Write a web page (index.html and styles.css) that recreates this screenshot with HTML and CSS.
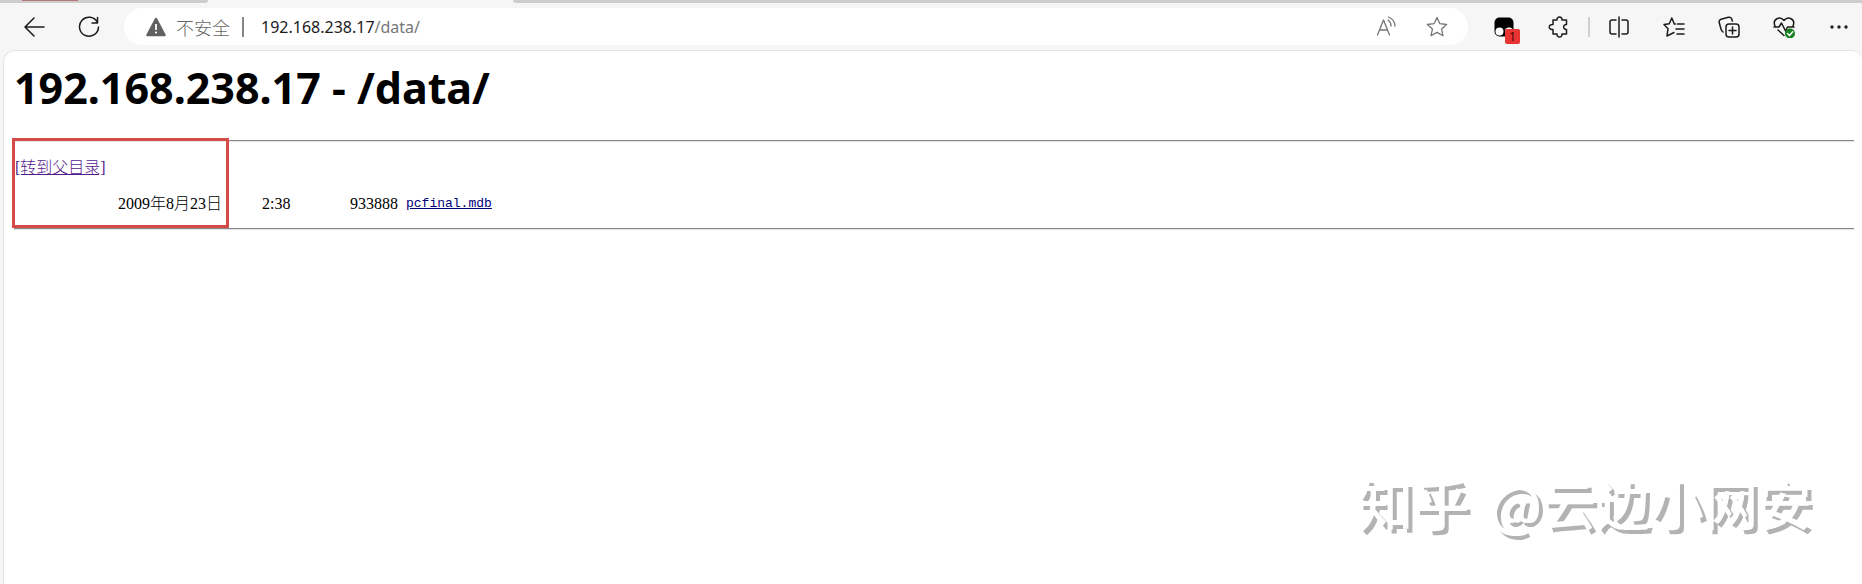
FILE: index.html
```
<!DOCTYPE html>
<html lang="zh-CN">
<head>
<meta charset="utf-8">
<title>192.168.238.17 - /data/</title>
<link rel="stylesheet" href="styles.css">
</head>
<body>
<div class="tabs"><div class="tab-left"><i class="tab-mark"></i></div><div class="tab-right"></div></div>
<header class="toolbar">
  <nav class="nav">
    <button class="icon" aria-label="返回"><svg width="22" height="22" viewBox="0 0 22 22"><path d="M11 2 2 11l9 9M2 11h19"/></svg></button>
    <button class="icon" aria-label="刷新"><svg width="22" height="22" viewBox="0 0 22 22"><path d="M19.5 6.500A9.500 9.500 0 1 0 20.500 11M19.500 1.500v5.500h-5.500"/></svg></button>
  </nav>
  <div class="address">
    <svg class="warn" width="20" height="20" viewBox="0 0 20 20"><path d="M10 2 18.500 18h-17z" fill="#606060" stroke="#606060" stroke-width="2.500" stroke-linejoin="round"/><path d="M10 7v6" stroke="#fff" stroke-width="1.800"/><circle cx="10" cy="15.500" r="1.100" fill="#fff"/></svg>
    <span class="unsafe">不安全</span>
    <i class="bar"></i>
    <div class="url">192.168.238.17<span class="path">/data/</span></div>
    <button class="icon grey" aria-label="朗读此页"><svg width="22" height="22" viewBox="0 0 22 22"><path d="m1.500 19 6-15 6 15M3.500 14h8M12 4q3 2 3 6M12.500 1q6.500 3 6.500 9"/></svg></button>
    <button class="icon grey star" aria-label="收藏"><svg width="22" height="22" viewBox="0 0 22 22"><path d="m11 1.500 2.900 6.200 6.700.8-5 4.600 1.400 6.700-6-3.400-6 3.400 1.400-6.700-5-4.600 6.700-.8z"/></svg></button>
  </div>
  <div class="actions">
    <button class="icon ext" aria-label="扩展程序"><svg width="22" height="22" viewBox="0 0 22 22"><rect x="1.500" y="1.500" width="19" height="19" rx="5" fill="#000" stroke="none"/><circle cx="6.500" cy="15.500" r="4" fill="#fff" stroke="none"/><circle cx="16" cy="15.500" r="4" fill="#fff" stroke="none"/></svg><span class="badge">1</span></button>
    <button class="icon" aria-label="扩展"><svg width="22" height="22" viewBox="0 0 22 22"><path d="M5 4h4c-.5-4 5.500-4 5 0h4.500v4.500c-3.800-.3-3.800 5.300 0 5v4.500h-4.500c.5 4-5.500 4-5 0H5v-4.500c-5 .3-5-5.300 0-5z"/></svg></button>
    <i class="rule"></i>
    <button class="icon" aria-label="拆分屏幕"><svg width="22" height="22" viewBox="0 0 22 22"><path d="M8 4H4Q2 4 2 6v10q0 2 2 2h4M14 4h4q2 0 2 2v10q0 2-2 2h-4M11 1v20"/></svg></button>
    <button class="icon" aria-label="收藏夹"><svg width="22" height="22" viewBox="0 0 22 22"><path d="M12.500 8h-1.200L8.800 2 6.300 7.800l-5.300.7 4 4.200L4 20l7-3.500M14.500 8H21M13 13h8M14 18h7"/></svg></button>
    <button class="icon" aria-label="集锦"><svg width="22" height="22" viewBox="0 0 22 22"><rect x="8" y="8" width="13" height="13" rx="3"/><path d="M14.500 11v7M11 14.500h7M5 16Q3.500 15 3 13L1.200 6.500Q.8 4 3 3.200L10.500 1.300Q13 1 13.800 3l.6 2"/></svg></button>
    <button class="icon" aria-label="浏览器概要"><svg width="22" height="22" viewBox="0 0 22 22"><path d="M2 10C-1 3 7-.5 11 4.500 15-.5 23 3 20 10M1 11h5l2.500-4 4 8 2-4H21M5 14l6 5.500"/><circle cx="17" cy="17.500" r="5" fill="#16811f" stroke="none"/><path d="m14.500 17.500 2 2 3.200-3.700" stroke="#fff"/></svg></button>
    <button class="icon" aria-label="设置及其他"><svg width="22" height="22" viewBox="0 0 22 22"><g fill="#222" stroke="none"><circle cx="4" cy="11" r="1.700"/><circle cx="11" cy="11" r="1.700"/><circle cx="18" cy="11" r="1.700"/></g></svg></button>
  </div>
</header>
<main class="page">
  <h1 class="title">192.168.238.17 - /data/</h1>
  <hr class="line">
  <div class="listing">
    <a class="parent" href="#">[转到父目录]</a>
    <div class="entry"><span>2009年8月23日</span><span class="time">2:38</span><span class="size">933888</span><a class="file" href="#">pcfinal.mdb</a></div>
    <i class="highlight"></i>
  </div>
  <hr class="line">
  <div class="watermark"><span class="brand">知乎</span> @云边小网安</div>
</main>
</body>
</html>
```
FILE: styles.css
```
* { box-sizing: border-box; }
body {
  margin: 0;
  min-height: 100vh;
  display: flex;
  flex-direction: column;
  background: #f6f6f6;
  color: #000;
  font-family: "Open Sans", "Noto Sans CJK SC", sans-serif;
}
.tabs { display: flex; justify-content: space-between; height: 3px; }
.tab-left { width: 208px; background: #cdcdcd; border-radius: 0 0 4px 0; padding-left: 22px; }
.tab-mark { display: block; width: 56px; height: 1px; background: #b9797c; }
.tab-right { flex: 1; margin-left: 305px; background: #cdcdcd; border-radius: 0 0 0 4px; }
.toolbar { display: flex; align-items: center; height: 47px; padding: 0 12px 0 23px; }
.nav { display: flex; gap: 33px; width: 101px; }
.icon {
  position: relative;
  display: block;
  flex: none;
  width: 22px;
  height: 22px;
  padding: 0;
  border: 0;
  background: none;
}
.icon svg { display: block; fill: none; stroke: #1b1b1b; stroke-width: 1.5; stroke-linecap: round; stroke-linejoin: round; }
.grey svg { stroke: #757575; stroke-width: 1.3; }
.address {
  display: flex;
  flex: 1;
  align-items: center;
  height: 37px;
  padding: 0 20px 0 22px;
  border-radius: 19px;
  background: #fff;
}
.unsafe { margin-left: 10px; color: #666; font-family: "Noto Sans CJK SC", sans-serif; font-weight: 300; font-size: 18px; line-height: 24px; }
.bar { width: 2px; height: 20px; margin: 0 17px 0 12px; background: #858585; }
.url { flex: 1; font-family: "Noto Sans", sans-serif; font-size: 16px; line-height: 24px; color: #1b1b1b; }
.path { color: #777; }
.star { margin-left: 28px; }
.actions { display: flex; align-items: center; gap: 33px; margin-left: 25px; }
.rule { width: 2px; height: 20px; margin: 0 -15px; background: #cfcfcf; }
.badge {
  position: absolute;
  left: 12px;
  top: 13px;
  width: 15px;
  height: 15px;
  border-radius: 2px;
  background: #e93434;
  color: #300;
  font: 12px/15px "Open Sans", sans-serif;
  text-align: center;
}
.page {
  position: relative;
  flex: 1;
  margin-left: 3px;
  padding: 8px 8px 0 10px;
  border: 1px solid #e3e3e3;
  border-width: 1px 0 0 1px;
  border-radius: 12px 10px 0 0;
  background: #fff;
}
.title { margin: 0 0 23px; font-family: "Noto Sans", sans-serif; font-size: 43px; line-height: 58px; font-weight: 700; }
.line { height: 2px; margin: 0; border: 0; border-top: 1px solid #888; border-bottom: 1px solid #e4e4e4; }
.listing { position: relative; padding: 14px 0 12px 1px; font-family: "Liberation Serif", "Noto Sans CJK SC", serif; font-size: 16px; line-height: 24px; font-weight: 300; }
.parent { display: block; width: max-content; margin-bottom: 12px; color: #551a8b; }
.entry { display: flex; padding-left: 103px; }
.time { width: 32px; margin-left: 40px; }
.size { margin-left: 56px; }
.file { margin-left: 8px; color: #00007a; font-family: "Liberation Mono", monospace; font-size: 13px; }
.highlight { position: absolute; left: -2px; top: -4px; bottom: 0; width: 217px; border: 3px solid #d64b47; pointer-events: none; }
.watermark {
  position: absolute;
  right: 50px;
  bottom: 41px;
  color: #fff;
  font-family: "Noto Sans CJK SC", sans-serif;
  font-size: 54px;
  line-height: 80px;
  font-weight: 500;
  text-shadow: 4px 4px 0 #b3b3b3;
}
.brand { margin-right: 8px; font-size: 56px; }
```
